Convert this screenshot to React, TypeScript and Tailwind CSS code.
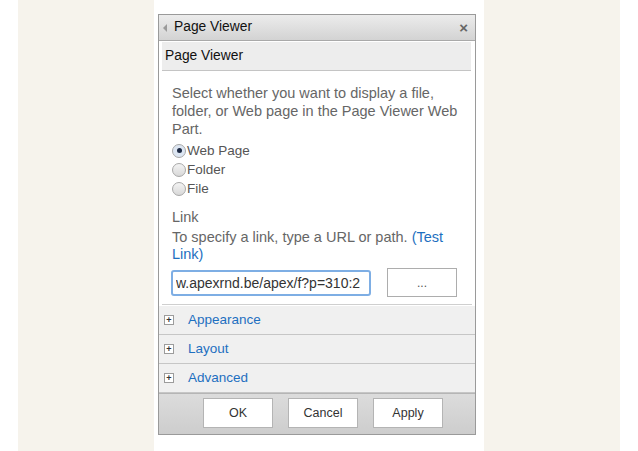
import { useState } from "react";

type Mode = "web" | "folder" | "file";

function Radio({ checked, label, onPick }: { checked: boolean; label: string; onPick: () => void }) {
  return (
    <label className="flex h-[19px] cursor-pointer items-center" onClick={onPick}>
      <span
        className={
          "flex h-[14px] w-[14px] items-center justify-center rounded-full border border-[#a8a8a8] " +
          (checked ? "bg-[#dde6f2]" : "bg-gradient-to-b from-[#f4f4f4] to-[#d8d8d8]")
        }
      >
        {checked && <span className="h-[5px] w-[5px] rounded-full bg-[#1d2a44]" />}
      </span>
      <span className="ml-[1px] text-[13.5px] text-[#555]">{label}</span>
    </label>
  );
}

function Section({ title }: { title: string }) {
  return (
    <div className="flex h-[29px] items-center border-b border-[#c6c6c6] bg-[#f0f0f0] pl-[5px]">
      <span className="flex h-[10px] w-[10px] items-center justify-center border border-[#9c9c9c] bg-white text-[9px] font-bold leading-none text-[#333]">
        +
      </span>
      <span className="ml-[14px] text-[13.5px] text-[#1e6fc0]">{title}</span>
    </div>
  );
}

function Btn({ children }: { children: string }) {
  return (
    <button className="h-[30px] w-[70px] border border-[#b4b4b4] bg-white text-[12.5px] text-[#333]">
      {children}
    </button>
  );
}

export default function App() {
  const [mode, setMode] = useState<Mode>("web");
  const [url, setUrl] = useState("w.apexrnd.be/apex/f?p=310:2");

  return (
    <div className="flex h-[451px] w-[638px] bg-white font-['Liberation_Sans',Arial,sans-serif]">
      <div className="w-[18px] shrink-0" />
      <div className="w-[136px] shrink-0 bg-[#f6f3ec]" />
      <div className="w-[4px] shrink-0" />

      <div className="mt-[14px] flex h-[421px] w-[318px] shrink-0 flex-col border border-[#9a9a9a] bg-white">
        {/* title bar */}
        <div className="flex h-[26px] items-center border-b border-[#a9a9a9] bg-gradient-to-b from-[#ececec] to-[#d3d3d3] pl-[4px] pr-[7px]">
          <span className="h-0 w-0 border-y-[4px] border-r-[4px] border-y-transparent border-r-[#9a9a9a]" />
          <span className="ml-[7px] text-[13.8px] text-[#111]">Page Viewer</span>
          <span className="ml-auto text-[15px] font-bold leading-none text-[#666]">×</span>
        </div>

        {/* section header */}
        <div className="mx-[3px] mr-[4px] mt-[1px] flex h-[29px] items-center border-b border-[#c4c4c4] bg-[#ededed] pl-[3px]">
          <span className="text-[13.8px] text-[#111]">Page Viewer</span>
        </div>

        <div className="flex flex-col pl-[13px] pr-[10px] text-[14.5px] leading-[18px] text-[#666]">
          <p className="mt-[13px]">
            Select whether you want to display a file, folder, or Web page in the Page Viewer Web Part.
          </p>

          <div className="mt-[3px] flex flex-col">
            <Radio checked={mode === "web"} label="Web Page" onPick={() => setMode("web")} />
            <Radio checked={mode === "folder"} label="Folder" onPick={() => setMode("folder")} />
            <Radio checked={mode === "file"} label="File" onPick={() => setMode("file")} />
          </div>

          <p className="mt-[10px]">Link</p>
          <p className="mt-[3px] leading-[17px]">
            To specify a link, type a URL or path. <span className="text-[#1e6fc0]">(Test</span>
            <br />
            <span className="text-[#1e6fc0]">Link)</span>
          </p>

          <div className="mt-[5px] flex items-center">
            <input
              value={url}
              onChange={(e) => setUrl(e.target.value)}
              className="ml-[-1px] h-[26px] w-[200px] rounded-[3px] border-2 border-[#7eaee4] px-[3px] text-[14px] text-[#333] outline-none"
            />
            <button className="ml-[16px] h-[29px] w-[70px] border border-[#adadad] bg-white text-[12px] text-[#555]">
              ...
            </button>
          </div>
        </div>

        <div className="mx-[3px] mt-[7px] border-b border-[#cfcfcf]" />
        <div className="mt-[1px]">
          <Section title="Appearance" />
          <Section title="Layout" />
          <Section title="Advanced" />
        </div>

        <div className="flex flex-1 items-center justify-center gap-[15px] border-t border-[#b5b5b5] bg-gradient-to-b from-[#dcdcdc] to-[#cdcdcd] pb-[2px] pl-[12px]">
          <Btn>OK</Btn>
          <Btn>Cancel</Btn>
          <Btn>Apply</Btn>
        </div>
      </div>

      <div className="w-[8px] shrink-0" />
      <div className="w-[136px] shrink-0 bg-[#f6f3ec]" />
      <div className="flex-1" />
    </div>
  );
}
